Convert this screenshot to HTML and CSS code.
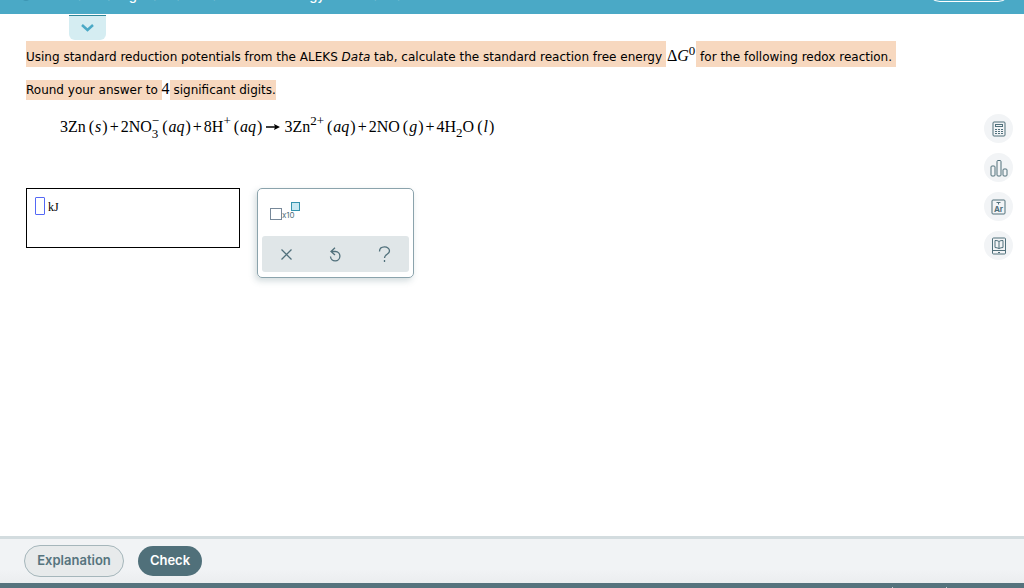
FILE: index.html
```html
<!DOCTYPE html>
<html lang="en">
<head>
  <meta charset="UTF-8" />
  <meta name="viewport" content="width=device-width, initial-scale=1.0"/>
  <title>Standard reaction free energy</title>
  <link rel="stylesheet" href="styles.css">
</head>
<body>

  <header class="top-bar">
    <span class="menu-dot"></span>
    <h1 class="topic">Calculating standard reaction free energy from standard</h1>
    <div class="user-pill"></div>
  </header>

  <div class="workspace">
    <main class="question">
      <button class="expand-tab" aria-label="Show topic details">
        <svg width="15" height="10" viewBox="0 0 15 10"><path d="M2 2l5.500 5 5.500-5" fill="none" stroke="#4aa9c6" stroke-width="2.500"/></svg>
      </button>

      <p class="prompt prompt-main"><mark>Using standard reduction potentials from the ALEKS <em>Data</em> tab, calculate the standard reaction free energy&nbsp;</mark><span class="math">Δ<i>G</i><sup>0</sup></span><mark>&nbsp;for the following redox reaction.&nbsp;</mark></p>
      <p class="prompt"><mark>Round your answer to&nbsp;</mark><span class="math">4</span><mark>&nbsp;significant digits.</mark></p>

      <div class="equation">
        <span>3Zn</span><span class="state">(<i>s</i>)</span><span class="plus">+</span>
        <span class="ion">2NO<span class="stack"><span>−</span><span>3</span></span></span><span class="state">(<i>aq</i>)</span><span class="plus">+</span>
        <span>8H<sup>+</sup></span><span class="state">(<i>aq</i>)</span>
        <svg class="arrow" width="14" height="8" viewBox="0 0 14 8"><path d="M0 4h10" stroke="#000" stroke-width="1.500"/><path d="M8 1l6 3-6 3 1-3z"/></svg>
        <span>3Zn<sup>2+</sup></span><span class="state">(<i>aq</i>)</span><span class="plus">+</span>
        <span>2NO</span><span class="state">(<i>g</i>)</span><span class="plus">+</span>
        <span>4H<sub>2</sub>O</span><span class="state">(<i>l</i>)</span>
      </div>

      <div class="answer-row">
        <div class="answer-box">
          <input class="answer-input" id="answer" type="text">
          <label for="answer">kJ</label>
        </div>

        <div class="palette">
          <button class="sci-button" aria-label="Scientific notation">
            <span class="base-box"></span><span class="times">x10</span><span class="exp-box"></span>
          </button>
          <div class="palette-actions">
            <button aria-label="Clear">
              <svg width="13" height="13" viewBox="0 0 13 13"><path d="M1.500 1.500l10 10M11.500 1.500l-10 10"/></svg>
            </button>
            <button aria-label="Undo">
              <svg width="13" height="15" viewBox="0 0 13 15"><path d="M2 4.500h4.500a4.700 4.700 0 1 1-5 5M6 .8l-4 3.700 4 3.500"/></svg>
            </button>
            <button aria-label="Help">
              <svg width="13" height="17" viewBox="0 0 13 17"><path d="M1.500 5.500c0-6 10-6 10-.5 0 3.500-5 3-5 7M6.500 14v2"/></svg>
            </button>
          </div>
        </div>
      </div>
    </main>

    <nav class="tools">
      <button aria-label="Calculator">
        <svg width="14" height="16" viewBox="0 0 14 16"><rect x="1" y="1" width="12" height="14" rx="1"/><rect x="3.500" y="3.500" width="7" height="2"/><path d="M3 8.500h8M3 10.500h8M3 12.500h8" stroke-dasharray="2 1"/></svg>
      </button>
      <button aria-label="Bar chart">
        <svg width="18" height="18" viewBox="0 0 18 18"><rect x="1" y="7" width="4" height="10" rx="1"/><rect x="7" y="1.500" width="4" height="15.500" rx="1"/><rect x="13" y="10" width="4" height="7" rx="1"/></svg>
      </button>
      <button aria-label="Periodic table">
        <svg width="15" height="16" viewBox="0 0 15 16"><rect x="1" y="1" width="13" height="14" rx="1"/><path d="M5.500 3.500h4M7.500 3.500v2"/><text x="7.500" y="13" text-anchor="middle">Ar</text></svg>
      </button>
      <button aria-label="Reference">
        <svg width="16" height="18" viewBox="0 0 16 18"><rect x="1.500" y="1" width="13" height="16" rx="1"/><path d="M1.500 13.500h13M8 4.500v7M8 4.500c-1.500-1-2.500-1-4-1v7c1.500 0 2.500.5 4 1 1.500-.5 2.500-1 4-1v-7c-1.500 0-2.500 0-4 1M7 15.500h2"/></svg>
      </button>
    </nav>
  </div>

  <footer class="bottom-bar">
    <button class="explain-button">Explanation</button>
    <button class="check-button">Check</button>
  </footer>
  <div class="legal-bar"><span></span><span></span></div>

</body>
</html>
```

FILE: styles.css
```css
* {
  box-sizing: border-box;
}

body {
  margin: 0;
  min-height: 100vh;
  display: flex;
  flex-direction: column;
  background: #fff;
  color: #000;
  font-family: "DejaVu Sans", Verdana, sans-serif;
  font-size: 12px;
}

button {
  padding: 0;
  border: none;
  background: none;
  cursor: pointer;
}

.top-bar {
  height: 14px;
  padding: 0 12px 0 21px;
  display: flex;
  align-items: flex-end;
  overflow: hidden;
  background: #4aa9c6;
  color: #fff;
}

.menu-dot {
  width: 10px;
  height: 10px;
  margin-bottom: 13px;
  border-radius: 50%;
  background: #3d96b3;
}

.topic {
  flex: 1;
  margin: 0 0 11px 36px;
  font: 500 13px/16px Inter, sans-serif;
}

.user-pill {
  width: 86px;
  height: 28px;
  margin-bottom: 12px;
  border: 1px solid #fff;
  border-radius: 14px;
}

.workspace {
  flex: 1;
  display: flex;
  justify-content: space-between;
}

.question {
  padding: 1px 0 0 26px;
}

.expand-tab {
  width: 37px;
  height: 25px;
  margin-left: 43px;
  display: flex;
  align-items: center;
  justify-content: center;
  border-top: 1px solid #2f8799;
  border-radius: 0 0 6px 6px;
  background: #d5edf2;
}

.prompt {
  margin: 0;
  line-height: 33px;
  white-space: nowrap;
}

.prompt-main {
  margin-top: 1px;
}

.prompt mark {
  padding: 3px 0;
  background: #f7d8bf;
  color: #000;
}

.prompt-main mark {
  padding: 9px 0 3px;
}

.math,
.equation {
  font-family: "Liberation Serif", "Times New Roman", serif;
}

.math {
  font-size: 16px;
  line-height: 16px;
}

.math sup {
  font-size: 13px;
  line-height: 0;
}

.prompt-main .math {
  margin: 0 1px;
}

.equation {
  height: 30px;
  margin: 5px 0 0 34px;
  display: flex;
  align-items: center;
  font-size: 16px;
}

.equation sup,
.equation sub {
  font-size: 13px;
  line-height: 0;
}

.equation sup {
  vertical-align: 7px;
}

.equation sub {
  vertical-align: -5px;
}

.state {
  margin-left: 3px;
}

.state i {
  margin: 0 1px;
}

.plus {
  margin: 0 2px;
}

.arrow {
  margin: 0 4px;
}

.ion {
  display: flex;
  align-items: center;
}

.stack {
  display: flex;
  flex-direction: column;
  font-size: 13px;
  line-height: 13px;
}

.answer-row {
  margin-top: 46px;
  display: flex;
  align-items: flex-start;
  gap: 17px;
}

.answer-box {
  width: 214px;
  height: 60px;
  padding: 8px;
  display: flex;
  align-items: flex-start;
  gap: 3px;
  border: 1px solid #000;
  font: 12px/20px "Liberation Serif", serif;
}

.answer-input {
  width: 10px;
  height: 18px;
  padding: 0;
  border: 1px solid #5468f5;
  border-radius: 1px;
}

.palette {
  width: 157px;
  padding: 13px 4px 5px;
  border: 1px solid #8ba3ac;
  border-radius: 5px;
  box-shadow: -2px 3px 6px rgba(80, 115, 125, 0.25);
}

.sci-button {
  height: 18px;
  margin: 0 0 16px 8px;
  display: flex;
  align-items: flex-end;
}

.base-box {
  width: 12px;
  height: 12px;
  border: 1px solid #789;
}

.times {
  font: 8px/9px Inter, sans-serif;
  color: #50707b;
}

.exp-box {
  width: 9px;
  height: 9px;
  margin: 0 0 9px -4px;
  border: 1px solid #3594ae;
  background: #c9e9f2;
}

.palette-actions {
  height: 36px;
  display: grid;
  grid-template-columns: repeat(3, 1fr);
  border-radius: 3px;
  background: #e0e6e8;
}

.palette-actions button {
  display: flex;
  align-items: center;
  justify-content: center;
}

.palette-actions svg,
.tools svg {
  fill: none;
  stroke: #50707b;
}

.palette-actions svg {
  stroke-width: 1.3;
}

.tools {
  padding: 100px 11px 0 0;
  display: flex;
  flex-direction: column;
  gap: 10px;
}

.tools button {
  width: 29px;
  height: 29px;
  display: flex;
  align-items: center;
  justify-content: center;
  border-radius: 50%;
  background: #f2f4f6;
}

.tools text {
  fill: #50707b;
  stroke: none;
  font: bold 8px Inter, sans-serif;
}

.bottom-bar {
  height: 47px;
  padding: 0 24px 1px;
  display: flex;
  align-items: center;
  gap: 14px;
  border-top: 3px solid #d3dcdf;
  background: linear-gradient(#f1f3f5 70%, #ebedef);
}

.bottom-bar button {
  padding-bottom: 2px;
  font: 600 13px/16px Inter, sans-serif;
}

.bottom-bar .explain-button {
  width: 100px;
  height: 32px;
  border: 1px solid #a5b6bb;
  border-radius: 16px;
  background: #e7eaeb;
  color: #56747e;
}

.bottom-bar .check-button {
  width: 64px;
  height: 30px;
  border-radius: 15px;
  background: #50707a;
  color: #fff;
}

.legal-bar {
  height: 5px;
  padding-right: 77px;
  display: flex;
  align-items: flex-end;
  justify-content: flex-end;
  gap: 53px;
  background: #56737d;
}

.legal-bar span {
  width: 1px;
  height: 1px;
  background: #c5d0d4;
}
```
